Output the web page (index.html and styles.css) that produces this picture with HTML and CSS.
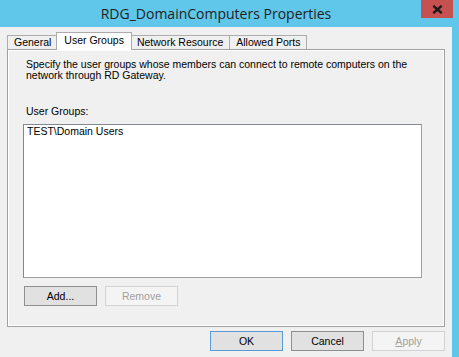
FILE: index.html
```html
<!DOCTYPE html>
<html>
<head>
<meta charset="utf-8">
<link rel="stylesheet" href="styles.css">
</head>
<body>
<div class="window">
  <div class="titlebar">
    <span class="title">RDG_DomainComputers Properties</span>
    <div class="close" aria-label="Close">
      <svg width="11" height="9" viewBox="0 0 11 9"><path d="M1.3 0.8 L9.7 8.2 M9.7 0.8 L1.3 8.2" stroke="#1a1a1a" stroke-width="2.3" fill="none"/></svg>
    </div>
  </div>
  <div class="frame">
    <div class="client">
      <div class="tabs">
        <div class="tab">General</div>
        <div class="tab active">User Groups</div>
        <div class="tab">Network Resource</div>
        <div class="tab">Allowed Ports</div>
      </div>
      <div class="panel">
        <p class="desc">Specify the user groups whose members can connect to remote computers on the network through RD Gateway.</p>
        <div class="label">User Groups:</div>
        <div class="list">
          <div class="item">TEST\Domain Users</div>
        </div>
        <div class="panel-buttons">
          <button class="btn">Add...</button>
          <button class="btn" disabled>Remove</button>
        </div>
      </div>
      <div class="footer">
        <button class="btn btn-default">OK</button>
        <button class="btn">Cancel</button>
        <button class="btn" disabled><u>A</u>pply</button>
      </div>
    </div>
  </div>
</div>
</body>
</html>
```

FILE: styles.css
```css
* { box-sizing: border-box; }
html, body { margin: 0; padding: 0; }
body {
  width: 459px;
  height: 357px;
  overflow: hidden;
  background: #f0f0f0;
  font-family: "Liberation Sans", Arial, sans-serif;
  font-size: 10.5px;
  color: #000;
}
.window {
  width: 459px;
  height: 357px;
  display: flex;
  flex-direction: column;
}
.titlebar {
  position: relative;
  height: 27px;
  padding-right: 27px;
  background: #60c6ea;
  display: flex;
  align-items: center;
  justify-content: center;
  flex: none;
}
.title {
  font-family: "Open Sans", "Noto Sans", sans-serif;
  font-size: 14px;
  color: #1f1f1f;
  margin-top: -1px;
}
.close {
  position: absolute;
  top: 0;
  right: 6px;
  width: 32px;
  height: 18px;
  background: #c75050;
  display: flex;
  align-items: center;
  justify-content: center;
}
.frame {
  flex: 1;
  display: flex;
  border-right: 7px solid #60c6ea;
}
.client {
  flex: 1;
  display: flex;
  flex-direction: column;
  padding: 0 7px;
}
.tabs {
  display: flex;
  align-items: flex-end;
  height: 23px;
  position: relative;
  z-index: 1;
  margin-bottom: -1px;
}
.tab {
  height: 14px;
  margin-bottom: 1px;
  line-height: 12px;
  padding: 0 6px;
  border: 1px solid #acacac;
  border-bottom: none;
  background: #f0f0f0;
  margin-right: -1px;
  white-space: nowrap;
}
.tab.active {
  height: 18px;
  margin: 0 -2px 0 -1px;
  padding: 0 7px;
  line-height: 14px;
  background: #fff;
  position: relative;
  z-index: 2;
}
.panel {
  flex: none;
  height: 278px;
  border: 1px solid #a0a0a0;
  box-shadow: inset 0 0 0 1px #fff;
  background: #f0f0f0;
  padding: 0 22px 0 15px;
  display: flex;
  flex-direction: column;
}
.desc {
  margin: 9px 0 0 3px;
  line-height: 10.5px;
}
.label {
  margin: 25px 0 0 3px;
  line-height: 13px;
}
.list {
  margin-top: 6px;
  height: 154px;
  background: #fff;
  border: 1px solid #828790;
  border-right-color: #a0a0a0;
  border-bottom-color: #a0a0a0;
  padding: 1px 3px;
}
.item {
  line-height: 11px;
}
.panel-buttons {
  display: flex;
  gap: 8px;
  margin-top: 8px;
  padding-left: 1px;
}
.btn {
  width: 73px;
  height: 20px;
  font-family: "Liberation Sans", Arial, sans-serif;
  font-size: 10.5px;
  color: #000;
  background: #e1e1e1;
  border: 1px solid #8f8f8f;
  padding: 0;
  margin: 0;
}
.btn:disabled {
  color: #a0a0a0;
  background: #f4f4f4;
  border-color: #d2d2d2;
}
.btn-default {
  border-color: #5b9bd5;
}
.btn u { text-decoration: underline; }
.footer {
  display: flex;
  justify-content: flex-end;
  gap: 8px;
  margin-top: 4px;
}
```
